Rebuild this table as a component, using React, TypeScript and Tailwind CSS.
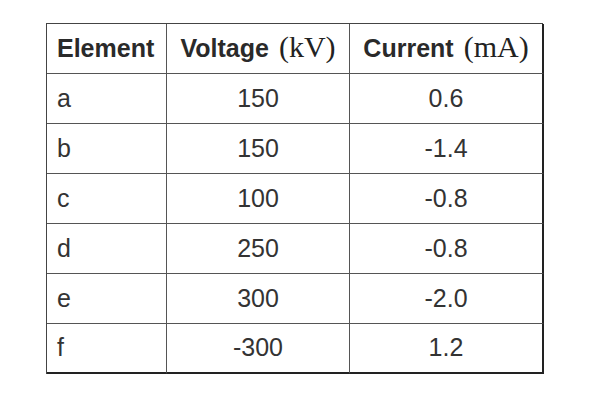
import React from "react";

const rows: [string, string, string][] = [
  ["a", "150", "0.6"],
  ["b", "150", "-1.4"],
  ["c", "100", "-0.8"],
  ["d", "250", "-0.8"],
  ["e", "300", "-2.0"],
  ["f", "-300", "1.2"],
];

function Unit({ children }: { children: React.ReactNode }) {
  return (
    <span className="ml-[10px] font-normal text-[30px] leading-none text-[#222] [font-family:'Liberation_Serif','DejaVu_Serif',serif]">
      ({children})
    </span>
  );
}

export default function App() {
  return (
    <div className="w-[606px] h-[410px] bg-white pl-[46px] pt-[23px] [font-family:'Liberation_Sans',Arial,sans-serif] text-[#333]">
      <div className="grid grid-cols-[120px_183px_194px] w-[497px] border-l border-t border-[#444]">
        <div className="h-[50px] flex items-center pl-[10px] font-bold text-[25px] text-[#2a2a2a] border-r border-b border-[#555]">
          Element
        </div>
        <div className="h-[50px] flex items-center justify-center pb-[4px] font-bold text-[25px] text-[#2a2a2a] border-r border-b border-[#555]">
          <span className="leading-none">
            Voltage
            <Unit>kV</Unit>
          </span>
        </div>
        <div className="h-[50px] flex items-center justify-center pb-[4px] font-bold text-[25px] text-[#2a2a2a] border-r-2 border-b border-r-[#222] border-b-[#555]">
          <span className="leading-none">
            Current
            <Unit>mA</Unit>
          </span>
        </div>
        {rows.map((r, i) => {
          const last = i === rows.length - 1;
          const b = last ? "border-b-2 border-b-[#222]" : "border-b border-b-[#555]";
          return (
            <React.Fragment key={r[0]}>
              <div className={`h-[50px] flex items-center pl-[10px] text-[25px] border-r border-r-[#555] ${b}`}>
                {r[0]}
              </div>
              <div className={`h-[50px] flex items-center justify-center text-[25px] border-r border-r-[#555] ${b}`}>
                {r[1]}
              </div>
              <div className={`h-[50px] flex items-center justify-center text-[25px] border-r-2 border-r-[#222] ${b}`}>
                {r[2]}
              </div>
            </React.Fragment>
          );
        })}
      </div>
    </div>
  );
}
